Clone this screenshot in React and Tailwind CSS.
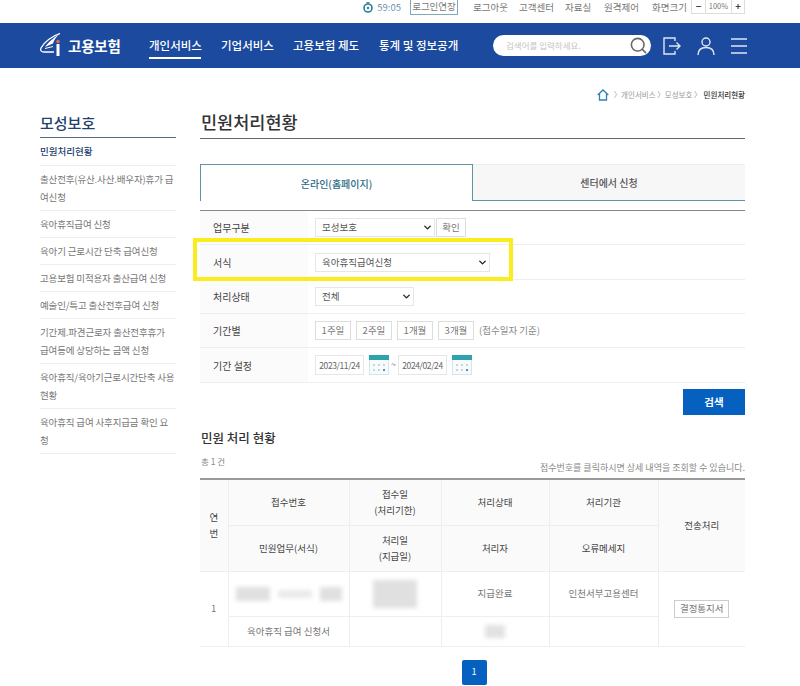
import { ChevronDown, Search } from 'lucide-react'

const font = { fontFamily: '"Noto Sans CJK KR", "Noto Sans", sans-serif' }

const sideItems = [
  '출산전후(유산.사산.배우자)휴가 급여신청',
  '육아휴직급여 신청',
  '육아기 근로시간 단축 급여신청',
  '고용보험 미적용자 출산급여 신청',
  '예술인/특고 출산전후급여 신청',
  '기간제.파견근로자 출산전후휴가\n급여등에 상당하는 금액 신청',
  '육아휴직/육아기근로시간단축 사용현황',
  '육아휴직 급여 사후지급금 확인 요청',
]

function Logo() {
  return (
    <svg width="24" height="26" viewBox="0 0 24 26" fill="none">
      <path d="M21 0.5 C13 3 5 9 2 15 C1 17 2 19 5 19 L15 19" stroke="#fff" strokeWidth="1.3" />
      <path d="M21 0.5 C17 4 15 7 14 10.5 L6 14 C8 11 14 5 21 0.5 Z" fill="#fff" />
      <path d="M6 15.5 L14 13.5" stroke="#fff" strokeWidth="1" />
      <rect x="17.5" y="11" width="3" height="12" fill="#fff" />
      <circle cx="19" cy="8.5" r="1.8" fill="#e8674a" />
    </svg>
  )
}

function LogoutIcon() {
  return (
    <svg width="20" height="20" viewBox="0 0 20 20" fill="none" stroke="#dfe6f3" strokeWidth="1.4">
      <path d="M13 5 V2 H2 V18 H13 V15" />
      <path d="M7 10 H18 M14.5 6.5 L18 10 L14.5 13.5" />
    </svg>
  )
}

function UserIcon() {
  return (
    <svg width="20" height="20" viewBox="0 0 20 20" fill="none" stroke="#dfe6f3" strokeWidth="1.4">
      <circle cx="10" cy="6" r="4" />
      <path d="M2 19 C2 14 5 11.5 10 11.5 C15 11.5 18 14 18 19" />
    </svg>
  )
}

function MenuIcon() {
  return (
    <svg width="18" height="18" viewBox="0 0 18 18" fill="none" stroke="#dfe6f3" strokeWidth="1.4">
      <path d="M1 2 H17 M1 9 H17 M1 16 H17" />
    </svg>
  )
}

function TimerIcon() {
  return (
    <svg width="10" height="11" viewBox="0 0 10 11" fill="none">
      <circle cx="5" cy="6" r="4" stroke="#2c7a9c" strokeWidth="1.6" />
      <path d="M3.5 0.7 H6.5" stroke="#2c7a9c" strokeWidth="1.2" />
      <circle cx="5" cy="6" r="1.2" fill="#2c7a9c" />
    </svg>
  )
}

function HomeIcon() {
  return (
    <svg width="12" height="12" viewBox="0 0 12 12" fill="none" stroke="#2f7fb5" strokeWidth="1.3">
      <path d="M0.7 6 L6 1 L11.3 6" />
      <path d="M2.5 5 V11 H9.5 V5" />
    </svg>
  )
}

function CalendarIcon() {
  return (
    <svg width="20" height="20" viewBox="0 0 20 20">
      <rect x="0.5" y="0.5" width="19" height="19" fill="#f7fbfc" stroke="#d5e6ea" />
      <rect x="0" y="0" width="20" height="5" fill="#2fa3ad" />
      <g fill="#c5d6dc">
        <rect x="4" y="9" width="2" height="2" />
        <rect x="9" y="9" width="2" height="2" />
        <rect x="14" y="9" width="2" height="2" />
        <rect x="4" y="14" width="2" height="2" />
        <rect x="9" y="14" width="2" height="2" />
      </g>
      <rect x="14" y="14" width="2" height="2" fill="#4a93b5" />
    </svg>
  )
}

function FormRow({ label, height, children }) {
  return (
    <div className={`flex border-b border-[#eeeeee] ${height}`}>
      <div className="flex w-[108px] shrink-0 items-center bg-[#fbfbfb] pl-[13px] text-[10px] text-[#444]">{label}</div>
      <div className="flex flex-1 items-center gap-[5px] pl-[7px]">{children}</div>
    </div>
  )
}

function Picker({ width, value }) {
  return (
    <div className={`relative flex h-[19px] items-center border border-[#e6e6e6] bg-white pl-[6px] text-[9.5px] text-[#555] ${width}`}>
      {value}
      <ChevronDown size={11} strokeWidth={3} className="absolute right-[1px] top-[3px] text-[#222]" />
    </div>
  )
}

function SmallButton({ children, width = 'w-[36px]' }) {
  return (
    <button type="button" className={`flex h-[19px] items-center justify-center border border-[#dddddd] bg-white text-[9.5px] text-[#777] ${width}`}>
      {children}
    </button>
  )
}

function DateBox({ value }) {
  return (
    <div className="flex h-[20px] w-[49px] items-center justify-center border border-[#e6e6e6] text-[8.5px] tracking-[-0.4px] text-[#666]">{value}</div>
  )
}

const th = 'border border-[#eeeeee] bg-[#fafafa] text-center align-middle text-[9.5px] font-normal leading-[16px] text-[#444]'
const td = 'border border-[#eeeeee] text-center align-middle text-[9.5px] text-[#777]'

export default function App() {
  return (
    <div className="relative h-[686px] w-[800px] overflow-hidden bg-white" style={font}>
      {/* top utility bar */}
      <div className="flex h-[23px] items-start justify-end pr-[55px] text-[9.5px] text-[#777]">
        <div className="flex items-center gap-[4px]">
          <TimerIcon />
          <span className="text-[#6d93ab]">59:05</span>
        </div>
        <button type="button" className="ml-[9px] mt-[-3px] h-[18px] w-[48px] border border-[#7fa9ba] text-[9.5px] text-[#777]">로그인연장</button>
        <div className="ml-[15px] w-[33px] whitespace-nowrap">로그아웃</div>
        <div className="ml-[13px] w-[33px] whitespace-nowrap">고객센터</div>
        <div className="ml-[13px] w-[26px] whitespace-nowrap">자료실</div>
        <div className="ml-[13px] w-[33px] whitespace-nowrap">원격제어</div>
        <div className="ml-[15px] w-[33px] whitespace-nowrap">화면크기</div>
        <div className="ml-[6px] mt-[-2px] flex h-[16px] w-[54px] items-center border border-[#dddddd] text-[#444]">
          <span className="w-[14px] border-r border-[#dddddd] text-center font-bold">−</span>
          <span className="flex-1 text-center text-[7.5px] text-[#777]">100%</span>
          <span className="w-[13px] border-l border-[#dddddd] text-center font-bold">+</span>
        </div>
      </div>

      {/* header */}
      <header className="flex h-[45px] items-center bg-[#1b4a9e] pl-[39px]">
        <Logo />
        <div className="ml-[5px] w-[55px] whitespace-nowrap text-[14.5px] font-bold tracking-[-0.2px] text-white">고용보험</div>
        <nav className="ml-[26px] flex h-full items-center text-[11.5px] font-medium text-white">
          <div className="relative w-[52px] whitespace-nowrap">
            개인서비스
            <div className="absolute left-0 top-[20px] h-[2px] w-[52px] bg-white" />
          </div>
          <div className="ml-[20px] w-[52px] whitespace-nowrap">기업서비스</div>
          <div className="ml-[20px] w-[66px] whitespace-nowrap">고용보험 제도</div>
          <div className="ml-[20px] w-[80px] whitespace-nowrap">통계 및 정보공개</div>
        </nav>
        <div className="ml-[34px] flex h-[21px] w-[158px] items-center justify-between rounded-full bg-white pl-[13px] pr-[3px] text-[8.5px] text-[#c4c4c4]">
          검색어를 입력하세요.
          <Search size={19} strokeWidth={2} className="text-[#666]" />
        </div>
        <div className="ml-[11px] flex items-center">
          <LogoutIcon />
          <div className="ml-[14px]"><UserIcon /></div>
          <div className="ml-[14px]"><MenuIcon /></div>
        </div>
      </header>

      <div className="flex pl-[40px]">
        {/* sidebar */}
        <aside className="mt-[43px] w-[136px] shrink-0">
          <div className="flex h-[27px] items-center border-b border-[#5c6b82] pb-[2px] text-[15px] font-medium text-[#23406e]">모성보호</div>
          <div className="flex h-[28px] items-center border-b border-[#eeeeee] text-[9.5px] font-medium text-[#23406e]">민원처리현황</div>
          <ul>
            {sideItems.map((item) => (
              <li key={item} className="whitespace-pre-line break-all border-b border-[#eeeeee] py-[4px] text-[9.5px] leading-[18px] tracking-[-0.15px] text-[#777]">{item}</li>
            ))}
          </ul>
        </aside>

        {/* main */}
        <main className="ml-[24px] w-[545px]">
          <div className="mt-[20px] flex h-[14px] items-center justify-end gap-[2px] text-[7.5px] text-[#999]">
            <HomeIcon />
            <span className="ml-[3px]">〉개인서비스 〉모성보호 〉</span>
            <span className="font-medium text-[#333]">민원처리현황</span>
          </div>
          <h1 className="mt-[4px] flex h-[33px] items-center border-b border-[#666666] pl-[1px] text-[17.5px] font-medium text-[#333]">민원처리현황</h1>

          <div className="mt-[25px] flex h-[37px]">
            <div className="flex w-[273px] items-center justify-center border-x border-t border-[#5f93a8] text-[10px] font-medium text-[#2d6c88]">온라인(홈페이지)</div>
            <div className="flex flex-1 items-center justify-center border-b border-t border-b-[#5f93a8] border-t-[#eeeeee] bg-[#f7f7f7] text-[10px] font-medium text-[#555]">센터에서 신청</div>
          </div>

          <div className="mt-[9px] border-t border-[#888888]">
            <FormRow label="업무구분" height="h-[34px]">
              <Picker width="w-[120px]" value="모성보호" />
              <div className="-ml-[4px]"><SmallButton width="w-[30px]">확인</SmallButton></div>
            </FormRow>
            <FormRow label="서식" height="h-[35px]">
              <Picker width="w-[175px]" value="육아휴직급여신청" />
            </FormRow>
            <FormRow label="처리상태" height="h-[34px]">
              <Picker width="w-[99px]" value="전체" />
            </FormRow>
            <FormRow label="기간별" height="h-[34px]">
              <SmallButton>1주일</SmallButton>
              <SmallButton>2주일</SmallButton>
              <SmallButton>1개월</SmallButton>
              <SmallButton>3개월</SmallButton>
              <span className="text-[9.5px] text-[#888]">(접수일자 기준)</span>
            </FormRow>
            <FormRow label="기간 설정" height="h-[35px]">
              <DateBox value="2023/11/24" />
              <CalendarIcon />
              <span className="-mx-[3px] w-[5px] text-[9px] text-[#666]">~</span>
              <DateBox value="2024/02/24" />
              <CalendarIcon />
            </FormRow>
          </div>

          <div className="mt-[6px] flex justify-end">
            <button type="button" className="h-[26px] w-[62px] bg-[#0660bf] text-[10.5px] font-bold text-white">검색</button>
          </div>

          <h2 className="mt-[14px] pl-[1px] text-[12.5px] font-medium leading-[18px] text-[#333]">민원 처리 현황</h2>
          <div className="mt-[7px] flex h-[24px] items-start justify-between pl-[1px] text-[8.5px] text-[#888]">
            <span className="mt-[1px]">총 1 건</span>
            <span className="mt-[7px] text-[9px]">접수번호를 클릭하시면 상세 내역을 조회할 수 있습니다.</span>
          </div>

          <table className="w-[545px] table-fixed border-collapse border-t-2 border-t-[#999999]">
            <colgroup>
              <col className="w-[28px]" />
              <col className="w-[121px]" />
              <col className="w-[92px]" />
              <col className="w-[108px]" />
              <col className="w-[109px]" />
              <col className="w-[87px]" />
            </colgroup>
            <thead>
              <tr className="h-[46px]">
                <th rowSpan={2} className={`${th} border-l-0 px-[8px]`}>연번</th>
                <th className={th}>접수번호</th>
                <th className={th}>접수일<br />(처리기한)</th>
                <th className={th}>처리상태</th>
                <th className={th}>처리기관</th>
                <th rowSpan={2} className={`${th} border-r-0`}>전송처리</th>
              </tr>
              <tr className="h-[46px]">
                <th className={th}>민원업무(서식)</th>
                <th className={th}>처리일<br />(지급일)</th>
                <th className={th}>처리자</th>
                <th className={th}>오류메세지</th>
              </tr>
            </thead>
            <tbody>
              <tr className="h-[45px]">
                <td rowSpan={2} className={`${td} border-l-0`}>1</td>
                <td className={td}>
                  <div className="flex items-center justify-center gap-[8px] blur-[2px]">
                    <div className="h-[14px] w-[34px] bg-[#e0e0e0]" />
                    <div className="h-[8px] w-[34px] bg-[#eaeaea]" />
                    <div className="h-[14px] w-[22px] bg-[#e0e0e0]" />
                  </div>
                </td>
                <td className={td}>
                  <div className="mx-auto h-[28px] w-[44px] bg-[#e0e0e0] blur-[2px]" />
                </td>
                <td className={td}>지급완료</td>
                <td className={td}>인천서부고용센터</td>
                <td rowSpan={2} className={`${td} border-r-0`}>
                  <button type="button" className="h-[18px] w-[55px] border border-[#cccccc] text-[9.5px] text-[#777]">결정통지서</button>
                </td>
              </tr>
              <tr className="h-[30px]">
                <td className={td}>육아휴직 급여 신청서</td>
                <td className={td} />
                <td className={td}>
                  <div className="mx-auto h-[13px] w-[20px] bg-[#e2e2e2] blur-[2px]" />
                </td>
                <td className={td} />
              </tr>
            </tbody>
          </table>

          <div className="mt-[13px] flex justify-center">
            <div className="ml-[3px] flex h-[25px] w-[25px] items-center justify-center rounded-[2px] bg-[#0660bf] text-[9px] text-white">1</div>
          </div>
        </main>
      </div>

      {/* yellow highlight drawn over the form */}
      <div className="absolute left-[193px] top-[238px] h-[43px] w-[320px] border-[4px] border-[#fbec1e]" />
    </div>
  )
}
